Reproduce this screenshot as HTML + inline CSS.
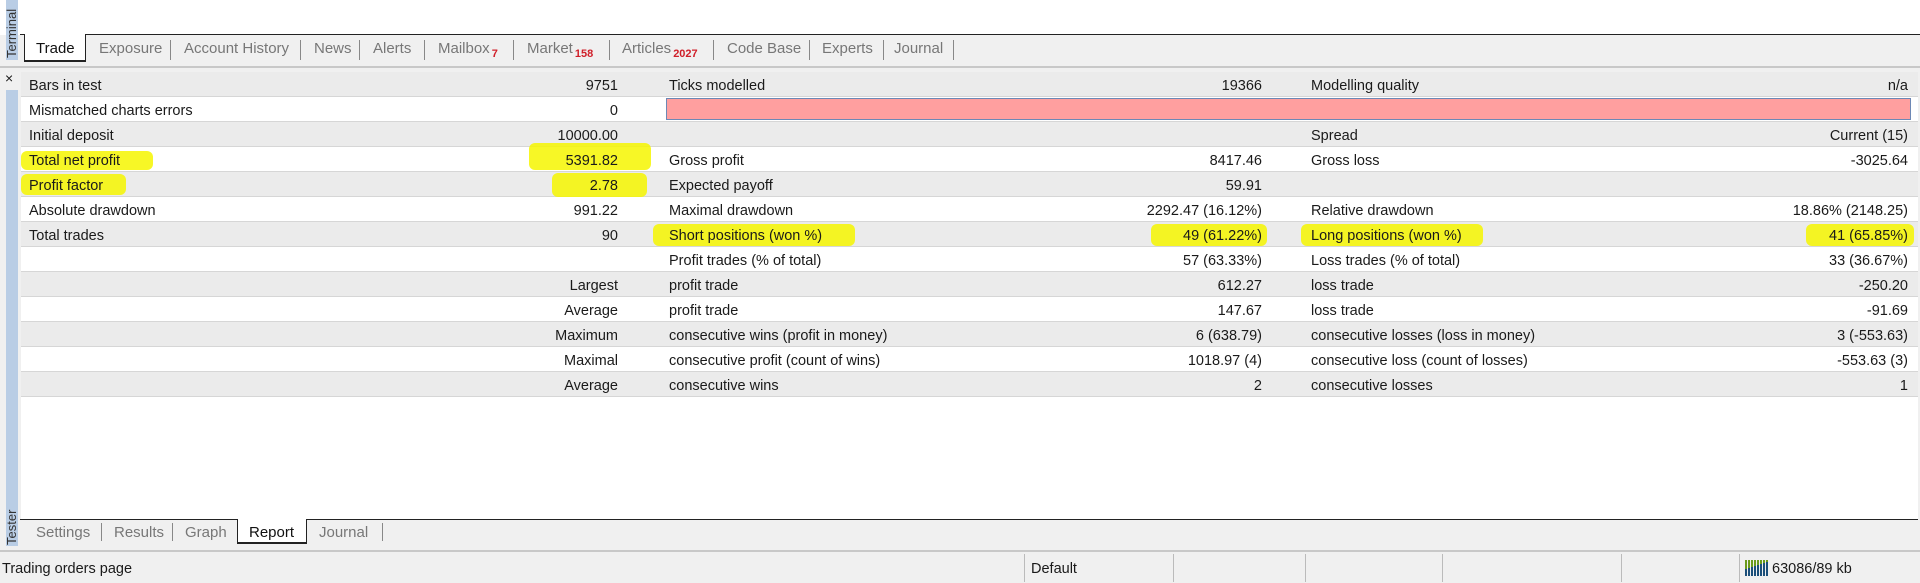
<!DOCTYPE html>
<html><head><meta charset="utf-8"><style>
*{margin:0;padding:0;box-sizing:border-box}
body{width:1920px;height:583px;background:#f0f0f0;font-family:"Liberation Sans",sans-serif;font-size:14.5px;color:#1a1a1a;position:relative;overflow:hidden}
.a{position:absolute;white-space:nowrap}
.side{position:absolute;left:6px;width:12px;background:#b9cde5}
.vl{position:absolute;transform:rotate(-90deg);transform-origin:left top;font-size:13px;color:#333}
.tab{position:absolute;top:37px;height:24px;line-height:24px;color:#777;font-size:15px}
.sep{position:absolute;top:40px;width:1px;height:20px;background:#888}
.num{color:#d0202a;font-weight:bold;font-size:11px;position:relative;top:4px;margin-left:2px}
.row{position:absolute;left:21px;width:1897px;height:25px;border-bottom:1px solid #d6d6d6}
.g{background:#ebebeb}.w{background:#fff}
.c{position:absolute;top:0;line-height:28px;white-space:nowrap}
.hl{position:absolute;background:#f6f600;border-radius:6px;opacity:.85}
.btab{position:absolute;top:521px;height:22px;line-height:24px;color:#777;font-size:15px}
.bsep{position:absolute;top:523px;width:1px;height:18px;background:#888}
.sd{position:absolute;top:554px;width:1px;height:28px;background:#bbb}
</style></head><body>
<div style="position:absolute;left:0;top:0;width:1920px;height:35px;background:#fff"></div>
<div style="position:absolute;left:20px;top:34px;width:1900px;height:1px;background:#222"></div>
<div class="side" style="top:0;height:60px"></div>
<div class="vl" style="left:4px;top:58px">Terminal</div>
<div style="position:absolute;left:24px;top:34px;width:62px;height:28px;background:#fff;border:1px solid #222;border-top:none;border-bottom-width:2px"></div>
<div class="tab" style="left:36px;color:#111">Trade</div>
<div class="tab" style="left:99px">Exposure</div><div class="sep" style="left:170px"></div>
<div class="tab" style="left:184px">Account History</div><div class="sep" style="left:300px"></div>
<div class="tab" style="left:314px">News</div><div class="sep" style="left:359px"></div>
<div class="tab" style="left:373px">Alerts</div><div class="sep" style="left:424px"></div>
<div class="tab" style="left:438px">Mailbox<span class="num">7</span></div><div class="sep" style="left:513px"></div>
<div class="tab" style="left:527px">Market<span class="num">158</span></div><div class="sep" style="left:609px"></div>
<div class="tab" style="left:622px">Articles<span class="num">2027</span></div><div class="sep" style="left:713px"></div>
<div class="tab" style="left:727px">Code Base</div><div class="sep" style="left:809px"></div>
<div class="tab" style="left:822px">Experts</div><div class="sep" style="left:883px"></div>
<div class="tab" style="left:894px">Journal</div><div class="sep" style="left:953px"></div>
<div style="position:absolute;left:0;top:66px;width:1920px;height:2px;background:#c8c8c8"></div>
<div class="a" style="left:5px;top:70px;font-size:14px">×</div>
<div class="side" style="top:90px;height:456px"></div>
<div style="position:absolute;left:21px;top:72px;width:1897px;height:448px;background:#fff"></div>

<div class="row g" style="top:72px"><span class="c" style="left:8px">Bars in test</span><span class="c" style="right:1300px">9751</span><span class="c" style="left:648px">Ticks modelled</span><span class="c" style="right:656px">19366</span><span class="c" style="left:1290px">Modelling quality</span><span class="c" style="right:10px">n/a</span></div>
<div class="row w" style="top:97px"><span class="c" style="left:8px">Mismatched charts errors</span><span class="c" style="right:1300px">0</span><div style="position:absolute;left:645px;top:1px;width:1245px;height:22px;background:#ff9f9f;border:1px solid #6d88b5"></div></div>
<div class="row g" style="top:122px"><span class="c" style="left:8px">Initial deposit</span><span class="c" style="right:1300px">10000.00</span><span class="c" style="left:1290px">Spread</span><span class="c" style="right:10px">Current (15)</span></div>
<div class="row w" style="top:147px"><div class="hl" style="left:0;top:4px;width:132px;height:19px"></div><div class="hl" style="left:508px;top:-4px;width:122px;height:27px"></div><span class="c" style="left:8px">Total net profit</span><span class="c" style="right:1300px">5391.82</span><span class="c" style="left:648px">Gross profit</span><span class="c" style="right:656px">8417.46</span><span class="c" style="left:1290px">Gross loss</span><span class="c" style="right:10px">-3025.64</span></div>
<div class="row g" style="top:172px"><div class="hl" style="left:0;top:2px;width:105px;height:21px"></div><div class="hl" style="left:531px;top:1px;width:95px;height:24px"></div><span class="c" style="left:8px">Profit factor</span><span class="c" style="right:1300px">2.78</span><span class="c" style="left:648px">Expected payoff</span><span class="c" style="right:656px">59.91</span></div>
<div class="row w" style="top:197px"><span class="c" style="left:8px">Absolute drawdown</span><span class="c" style="right:1300px">991.22</span><span class="c" style="left:648px">Maximal drawdown</span><span class="c" style="right:656px">2292.47 (16.12%)</span><span class="c" style="left:1290px">Relative drawdown</span><span class="c" style="right:10px">18.86% (2148.25)</span></div>
<div class="row g" style="top:222px"><div class="hl" style="left:632px;top:2px;width:202px;height:22px"></div><div class="hl" style="left:1130px;top:2px;width:116px;height:22px"></div><div class="hl" style="left:1280px;top:2px;width:182px;height:22px"></div><div class="hl" style="left:1785px;top:2px;width:108px;height:22px"></div><span class="c" style="left:8px">Total trades</span><span class="c" style="right:1300px">90</span><span class="c" style="left:648px">Short positions (won %)</span><span class="c" style="right:656px">49 (61.22%)</span><span class="c" style="left:1290px">Long positions (won %)</span><span class="c" style="right:10px">41 (65.85%)</span></div>
<div class="row w" style="top:247px"><span class="c" style="left:648px">Profit trades (% of total)</span><span class="c" style="right:656px">57 (63.33%)</span><span class="c" style="left:1290px">Loss trades (% of total)</span><span class="c" style="right:10px">33 (36.67%)</span></div>
<div class="row g" style="top:272px"><span class="c" style="right:1300px">Largest</span><span class="c" style="left:648px">profit trade</span><span class="c" style="right:656px">612.27</span><span class="c" style="left:1290px">loss trade</span><span class="c" style="right:10px">-250.20</span></div>
<div class="row w" style="top:297px"><span class="c" style="right:1300px">Average</span><span class="c" style="left:648px">profit trade</span><span class="c" style="right:656px">147.67</span><span class="c" style="left:1290px">loss trade</span><span class="c" style="right:10px">-91.69</span></div>
<div class="row g" style="top:322px"><span class="c" style="right:1300px">Maximum</span><span class="c" style="left:648px">consecutive wins (profit in money)</span><span class="c" style="right:656px">6 (638.79)</span><span class="c" style="left:1290px">consecutive losses (loss in money)</span><span class="c" style="right:10px">3 (-553.63)</span></div>
<div class="row w" style="top:347px"><span class="c" style="right:1300px">Maximal</span><span class="c" style="left:648px">consecutive profit (count of wins)</span><span class="c" style="right:656px">1018.97 (4)</span><span class="c" style="left:1290px">consecutive loss (count of losses)</span><span class="c" style="right:10px">-553.63 (3)</span></div>
<div class="row g" style="top:372px"><span class="c" style="right:1300px">Average</span><span class="c" style="left:648px">consecutive wins</span><span class="c" style="right:656px">2</span><span class="c" style="left:1290px">consecutive losses</span><span class="c" style="right:10px">1</span></div>

<div style="position:absolute;left:20px;top:519px;width:1898px;height:1px;background:#222"></div>
<div class="vl" style="left:4px;top:545px">Tester</div>
<div class="btab" style="left:36px">Settings</div><div class="bsep" style="left:101px"></div>
<div class="btab" style="left:114px">Results</div><div class="bsep" style="left:172px"></div>
<div class="btab" style="left:185px">Graph</div>
<div style="position:absolute;left:237px;top:519px;width:70px;height:25px;background:#fff;border:1px solid #222;border-top:none;border-bottom-width:2px"></div>
<div class="btab" style="left:249px;color:#111">Report</div>
<div class="btab" style="left:319px">Journal</div><div class="bsep" style="left:382px"></div>
<div style="position:absolute;left:0;top:550px;width:1920px;height:2px;background:#c8c8c8"></div>
<div class="a" style="left:2px;top:561px;font-size:14.5px">Trading orders page</div>
<div class="sd" style="left:1024px"></div><div class="a" style="left:1031px;top:561px">Default</div>
<div class="sd" style="left:1173px"></div><div class="sd" style="left:1305px"></div><div class="sd" style="left:1442px"></div><div class="sd" style="left:1621px"></div><div class="sd" style="left:1739px"></div>
<svg class="a" style="left:1745px;top:560px" width="24" height="16" viewBox="0 0 24 16">
<g fill="#1c4f7a"><rect x="0" y="9" width="2" height="7"/><rect x="3" y="8" width="2" height="8"/><rect x="6" y="7" width="2" height="9"/><rect x="9" y="6" width="2" height="10"/><rect x="12" y="5" width="2" height="11"/><rect x="15" y="4" width="2" height="12"/><rect x="18" y="3" width="2" height="13"/><rect x="21" y="2" width="2" height="14"/></g>
<g fill="#6a9a1a"><rect x="0" y="0" width="2" height="9"/><rect x="3" y="0" width="2" height="8"/><rect x="6" y="0" width="2" height="7"/><rect x="9" y="0" width="2" height="6"/><rect x="12" y="0" width="2" height="5"/><rect x="15" y="0" width="2" height="4"/><rect x="18" y="0" width="2" height="3"/><rect x="21" y="0" width="2" height="2"/></g></svg>
<div class="a" style="left:1772px;top:561px">63086/89 kb</div>
</body></html>
